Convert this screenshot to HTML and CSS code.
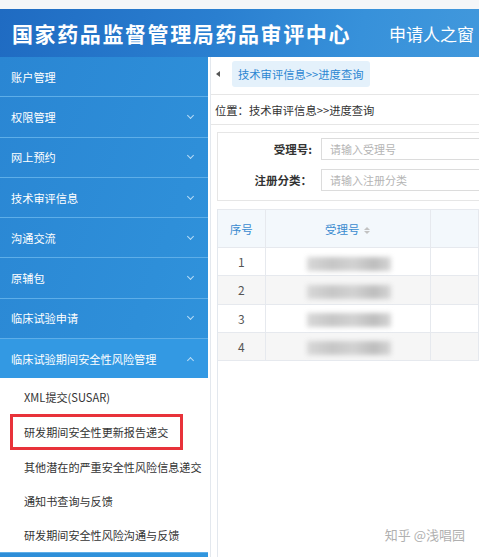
FILE: index.html
```html
<!DOCTYPE html>
<html lang="zh-CN">
<head>
    <meta charset="UTF-8">
    <title>申请人之窗</title>
    <link rel="stylesheet" href="styles.css">
</head>
<body>
    <div class="topline"></div>
    <div class="header">
        <div class="title">国家药品监督管理局药品审评中心</div>
        <div class="subtitle">申请人之窗</div>
    </div>

    <div class="wrap">
        <!-- 左侧菜单 -->
        <div class="side">
            <div class="item">账户管理</div>
            <div class="item">权限管理<span class="arr"></span></div>
            <div class="item">网上预约<span class="arr"></span></div>
            <div class="item">技术审评信息<span class="arr"></span></div>
            <div class="item">沟通交流<span class="arr"></span></div>
            <div class="item">原辅包<span class="arr"></span></div>
            <div class="item">临床试验申请<span class="arr"></span></div>
            <div class="item active">临床试验期间安全性风险管理<span class="arr up"></span></div>
            <ul class="sub">
                <li>XML提交(SUSAR)</li>
                <li class="mark">研发期间安全性更新报告递交</li>
                <li>其他潜在的严重安全性风险信息递交</li>
                <li>通知书查询与反馈</li>
                <li>研发期间安全性风险沟通与反馈</li>
            </ul>
            <div class="next"></div>
        </div>

        <!-- 右侧内容 -->
        <div class="main">
            <div class="tabs">
                <span class="tri"></span>
                <span class="tab">技术审评信息&gt;&gt;进度查询</span>
            </div>
            <div class="pos">位置：技术审评信息&gt;&gt;进度查询</div>
            <div class="inner">
                <div class="form">
                    <div class="row">
                        <label>受理号:</label>
                        <div class="input">请输入受理号</div>
                    </div>
                    <div class="row">
                        <label>注册分类：</label>
                        <div class="input">请输入注册分类</div>
                    </div>
                </div>
                <div class="grid">
                    <table>
                        <tr class="head">
                            <th class="c1">序号</th>
                            <th class="c2">受理号 <span class="sort"></span></th>
                            <th></th>
                        </tr>
                        <tr><td>1</td><td><span class="blur"></span></td><td></td></tr>
                        <tr class="odd"><td>2</td><td><span class="blur"></span></td><td></td></tr>
                        <tr><td>3</td><td><span class="blur"></span></td><td></td></tr>
                        <tr class="odd"><td>4</td><td><span class="blur"></span></td><td></td></tr>
                    </table>
                    <div class="water">知乎 @浅唱园</div>
                </div>
            </div>
        </div>
    </div>
</body>
</html>
```

FILE: styles.css
```css
/*初始化*/
*{
    box-sizing: border-box;
}
html,body{
    margin: 0;
    padding: 0;
    height: 100%;
    overflow: hidden;
}
body{
    font-family: "Noto Sans CJK SC", "Liberation Sans", sans-serif;
    background: #fff;
}
ul,li{
    margin: 0;
    padding: 0;
    list-style: none;
}

/*1.顶部*/
.topline{
    height: 9px;
    background: #f4f6f8;
}
.header{
    height: 48px;
    display: flex;
    align-items: center;
    padding-left: 12px;
    background: linear-gradient(100deg, #1f6bc2 0%, #2a7fd0 45%, #3791da 75%, #4198dc 100%);
    color: #fff;
}
.title{
    font-size: 21px;
    font-weight: bold;
    letter-spacing: 1.6px;
    white-space: nowrap;
}
.subtitle{
    font-size: 17px;
    margin-left: 38px;
    white-space: nowrap;
}

/*2.主体*/
.wrap{
    display: flex;
    height: 500px;
    overflow: hidden;
}
.side{
    width: 208px;
    flex-shrink: 0;
    background: linear-gradient(110deg, #2a86d3 0%, #2e8fd9 60%, #3196de 100%);
    display: flex;
    flex-direction: column;
}
.item{
    height: 40.3px;
    flex-shrink: 0;
    border-bottom: 1px solid #5eaee8;
    color: #fff;
    font-size: 11.2px;
    padding-left: 11px;
    padding-right: 14px;
    display: flex;
    align-items: center;
    justify-content: space-between;
}
.item.active{
    height: 39px;
    background: #3399e3;
    border-bottom: none;
}
.arr{
    width: 5px;
    height: 5px;
    border-right: 1.5px solid #b9dcf6;
    border-bottom: 1.5px solid #b9dcf6;
    transform: rotate(45deg);
    margin-top: -3px;
    margin-right: 1px;
}
.arr.up{
    transform: rotate(-135deg);
    margin-top: 3px;
}
.sub{
    background: #fff;
    padding-top: 2px;
    height: 174px;
    flex-shrink: 0;
}
.sub li{
    height: 34px;
    display: flex;
    align-items: center;
    padding-left: 24px;
    font-size: 11.1px;
    color: #333;
    white-space: nowrap;
}
.sub li.mark{
    margin-left: 10px;
    margin-right: 25px;
    padding-left: 11px;
    height: 36px;
    border: 3px solid #e8323a;
}
.next{
    flex: 1;
    border-top: 1px solid #5eaee8;
}

/*3.右侧*/
.main{
    flex: 1;
    margin-left: 2px;
    border-left: 1px solid #e3e8ee;
    display: flex;
    flex-direction: column;
    overflow: hidden;
}
.tabs{
    height: 38px;
    flex-shrink: 0;
    display: flex;
    align-items: center;
    border-bottom: 1px solid #e6e6e6;
    padding-left: 5px;
}
.tri{
    width: 0;
    height: 0;
    border-top: 3px solid transparent;
    border-bottom: 3px solid transparent;
    border-right: 4px solid #555;
    margin-right: 12px;
    margin-top: -4px;
}
.tab{
    background: #e4f1fb;
    color: #2c87d2;
    font-size: 11.3px;
    padding: 5px 6px;
    border-radius: 3px;
    margin-top: -4px;
    white-space: nowrap;
}
.pos{
    height: 30px;
    flex-shrink: 0;
    border-bottom: 1px solid #e6e6e6;
    font-size: 11.3px;
    color: #333;
    display: flex;
    align-items: center;
    padding-left: 4px;
    white-space: nowrap;
}
.inner{
    flex: 1;
    padding: 7px 0 0 6px;
    display: flex;
    flex-direction: column;
}
.form{
    height: 69px;
    border: 1px solid #e6e6e6;
    border-right: none;
    padding-top: 1px;
}
.row{
    display: flex;
    align-items: center;
    height: 30px;
    margin-bottom: 1px;
}
.row label{
    width: 103px;
    text-align: right;
    font-size: 11.5px;
    font-weight: bold;
    color: #333;
    padding-right: 9px;
    white-space: nowrap;
}
.input{
    flex: 1;
    height: 22px;
    border: 1px solid #dcdcdc;
    border-right: none;
    font-size: 11px;
    color: #b5b5b5;
    padding-left: 8px;
    display: flex;
    align-items: center;
    white-space: nowrap;
}

/*4.表格*/
.grid{
    flex: 1;
    margin-top: 8px;
    border-left: 1px solid #e3e8ee;
    position: relative;
}
table{
    width: 100%;
    border-collapse: collapse;
    font-size: 12px;
}
th,td{
    border-bottom: 1px solid #e6e9ee;
    border-right: 1px solid #e6e9ee;
    text-align: center;
    color: #555;
    height: 28.3px;
    padding: 0;
    font-weight: normal;
}
.head th{
    background: #f3f8fc;
    color: #3a8bd0;
    height: 38px;
    border-top: 1px solid #e6e9ee;
    font-size: 11.5px;
}
.c1{
    width: 47px;
}
.c2{
    width: 165px;
}
tr.odd td{
    background: #f6f6f6;
}
.sort{
    display: inline-block;
    width: 0;
    height: 0;
    border-left: 3px solid transparent;
    border-right: 3px solid transparent;
    border-bottom: 3px solid #c2c2c2;
    vertical-align: middle;
    margin-left: 2px;
    position: relative;
    top: -2px;
}
.sort::after{
    content: "";
    position: absolute;
    left: -3px;
    top: 4px;
    border-left: 3px solid transparent;
    border-right: 3px solid transparent;
    border-top: 3px solid #c2c2c2;
}
.blur{
    display: inline-block;
    width: 84px;
    height: 14px;
    background: linear-gradient(90deg, #d8d8d8 0%, #c6c6c6 30%, #d2d2d2 55%, #bdbdbd 80%, #d6d6d6 100%);
    filter: blur(2.5px);
    vertical-align: middle;
    margin-left: 2px;
}

/*水印*/
.water{
    position: absolute;
    right: 14px;
    bottom: 13px;
    font-size: 13px;
    color: #b0b0b0;
    white-space: nowrap;
}
```
